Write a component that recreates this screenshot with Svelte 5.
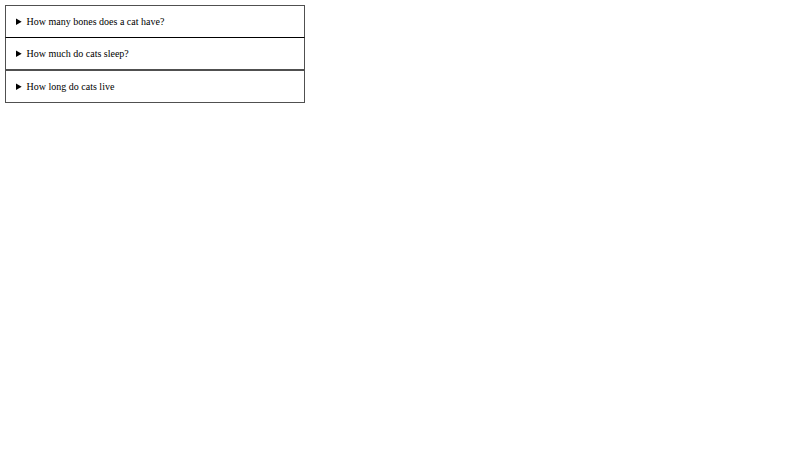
<script>
    const questions = [
        { title: "How many bones does a cat have?", answer: "A cat has around 230 bones." },
        { title: "How much do cats sleep?", answer: "Cats sleep 12 to 16 hours a day." },
        { title: "How long do cats live", answer: "Cats live 12 to 18 years." }
    ]

    let open = $state([false, false, false])
</script>

<div class="faq">
    {#each questions as question, i}
        <details bind:open={open[i]}>
            <summary>{question.title}</summary>
            {#if open[i]}
                <p>{question.answer}</p>
            {/if}
        </details>
    {/each}
</div>

<style>
    .faq {
        box-sizing: border-box;
        width: 100%;
        max-width: 310px;
        padding: 5px;
        font-family: "Liberation Serif", "Times New Roman", serif;
        font-size: 10px;
        color: black;
    }

    details {
        border: 1px solid #505050;
        padding: 10px;
    }

    details:first-child {
        border-bottom-color: black;
    }

    details:nth-child(2) {
        border-top: 0;
    }

    summary {
        line-height: 11px;
        cursor: pointer;
    }

    p {
        margin: 10px 0 0;
    }
</style>
